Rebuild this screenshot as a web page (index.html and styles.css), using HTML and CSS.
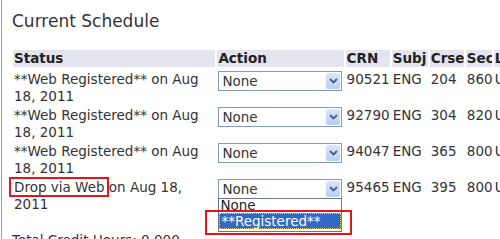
FILE: index.html
```html
<!DOCTYPE html>
<html lang="en">
<head>
	<meta charset="UTF-8" />
	<title>Current Schedule</title>
	<link rel="stylesheet" href="styles.css">
</head>
<body>
	<div class="page">
		<h2 class="title">Current Schedule</h2>
		<table class="sched">
			<colgroup>
				<col class="c-status" />
				<col class="c-action" />
				<col class="c-crn" />
				<col class="c-subj" />
				<col class="c-crse" />
				<col class="c-sec" />
				<col class="c-lvl" />
			</colgroup>
			<thead>
				<tr>
					<th>Status</th>
					<th>Action</th>
					<th>CRN</th>
					<th>Subj</th>
					<th>Crse</th>
					<th>Sec</th>
					<th>Level</th>
				</tr>
			</thead>
			<tbody>
				<tr>
					<td>**Web Registered** on Aug 18, 2011</td>
					<td>
						<div class="sel"><span class="sel-val">None</span><span class="sel-btn"><svg width="9" height="6" viewBox="0 0 9 6"><path d="M1 1 L4.5 4.5 L8 1" fill="none" stroke="#4a5f86" stroke-width="1.8"/></svg></span></div>
					</td>
					<td>90521</td>
					<td>ENG</td>
					<td>204</td>
					<td>860</td>
					<td>UG</td>
				</tr>
				<tr>
					<td>**Web Registered** on Aug 18, 2011</td>
					<td>
						<div class="sel"><span class="sel-val">None</span><span class="sel-btn"><svg width="9" height="6" viewBox="0 0 9 6"><path d="M1 1 L4.5 4.5 L8 1" fill="none" stroke="#4a5f86" stroke-width="1.8"/></svg></span></div>
					</td>
					<td>92790</td>
					<td>ENG</td>
					<td>304</td>
					<td>820</td>
					<td>UG</td>
				</tr>
				<tr>
					<td>**Web Registered** on Aug 18, 2011</td>
					<td>
						<div class="sel"><span class="sel-val">None</span><span class="sel-btn"><svg width="9" height="6" viewBox="0 0 9 6"><path d="M1 1 L4.5 4.5 L8 1" fill="none" stroke="#4a5f86" stroke-width="1.8"/></svg></span></div>
					</td>
					<td>94047</td>
					<td>ENG</td>
					<td>365</td>
					<td>800</td>
					<td>UG</td>
				</tr>
				<tr>
					<td><span class="mark">Drop via Web</span> on Aug 18, 2011</td>
					<td>
						<div class="sel open"><span class="sel-val">None</span><span class="sel-btn"><svg width="9" height="6" viewBox="0 0 9 6"><path d="M1 1 L4.5 4.5 L8 1" fill="none" stroke="#4a5f86" stroke-width="1.8"/></svg></span>
							<ul class="sel-list">
								<li>None</li>
								<li class="picked">**Registered**</li>
							</ul>
							<div class="mark-box"></div>
						</div>
					</td>
					<td>95465</td>
					<td>ENG</td>
					<td>395</td>
					<td>800</td>
					<td>UG</td>
				</tr>
			</tbody>
		</table>
		<p class="total">Total Credit Hours: 0.000</p>
	</div>
</body>
</html>
```

FILE: styles.css
```css
html, body {
	margin: 0;
	padding: 0;
	background: #fff;
	overflow: hidden;
}
body {
	font-family: "DejaVu Sans", Verdana, sans-serif;
	font-size: 13.5px;
	color: #333;
}
.page {
	margin-left: 1px;
	border-left: 1px solid #a0a0a0;
	padding-left: 10px;
	height: 239px;
	overflow: hidden;
}
.title {
	margin: 0;
	padding-top: 10px;
	font-size: 17px;
	line-height: 22px;
	font-weight: normal;
	color: #333;
}
.sched {
	margin: 16px 0 0 -1px;
	border-collapse: separate;
	border-spacing: 2px;
	table-layout: fixed;
	width: 545px;
}
.c-status { width: 202px; }
.c-action { width: 126px; }
.c-crn { width: 44px; }
.c-subj { width: 36px; }
.c-crse { width: 34px; }
.c-sec { width: 26px; }
.c-lvl { width: 60px; }
.sched th {
	background-color: #e3e4ee;
	color: #222;
	font-weight: bold;
	text-align: left;
	padding: 0 1px;
	line-height: 17px;
	height: 17px;
	white-space: nowrap;
	overflow: hidden;
}
.sched td {
	vertical-align: top;
	padding: 0 1px;
	line-height: 17px;
	white-space: normal;
}
.sched tbody tr:first-child td {
	padding-top: 2px;
}
.mark {
	border: 2px solid #e5141c;
	padding: 0 2px 0 3px;
	margin: 0 -4px 0 -5px;
}
.sel {
	position: relative;
	display: flex;
	width: 122px;
	height: 18px;
	border: 1px solid #7f9db9;
	background: #fff;
}
.sel-val {
	flex: 1;
	padding-left: 3px;
	line-height: 18px;
	color: #333;
}
.sel-btn {
	width: 14px;
	margin: 1px;
	border-radius: 2px;
	background: linear-gradient(#dbe6fc, #b9cdf5);
	display: flex;
	align-items: center;
	justify-content: center;
}
.sel-list {
	position: absolute;
	left: -1px;
	top: 18px;
	width: 122px;
	height: 32px;
	margin: 0;
	padding: 0;
	list-style: none;
	border: 1px solid #6d7887;
	background: #fff;
	overflow: hidden;
}
.sel-list li {
	line-height: 15px;
	padding-left: 1px;
	color: #222;
}
.sel-list li:first-child {
	margin-top: -1px;
}
.sel-list .picked {
	background-color: #316ac5;
	color: #fff;
	outline: 1px dotted #e8d27a;
	outline-offset: -1px;
	line-height: 16px;
	padding-left: 2px;
}
.mark-box {
	position: absolute;
	left: -14px;
	top: 30px;
	width: 143px;
	height: 21px;
	border: 2px solid #e5141c;
}
.total {
	margin: 17px 0 0;
	line-height: 17px;
}
```
